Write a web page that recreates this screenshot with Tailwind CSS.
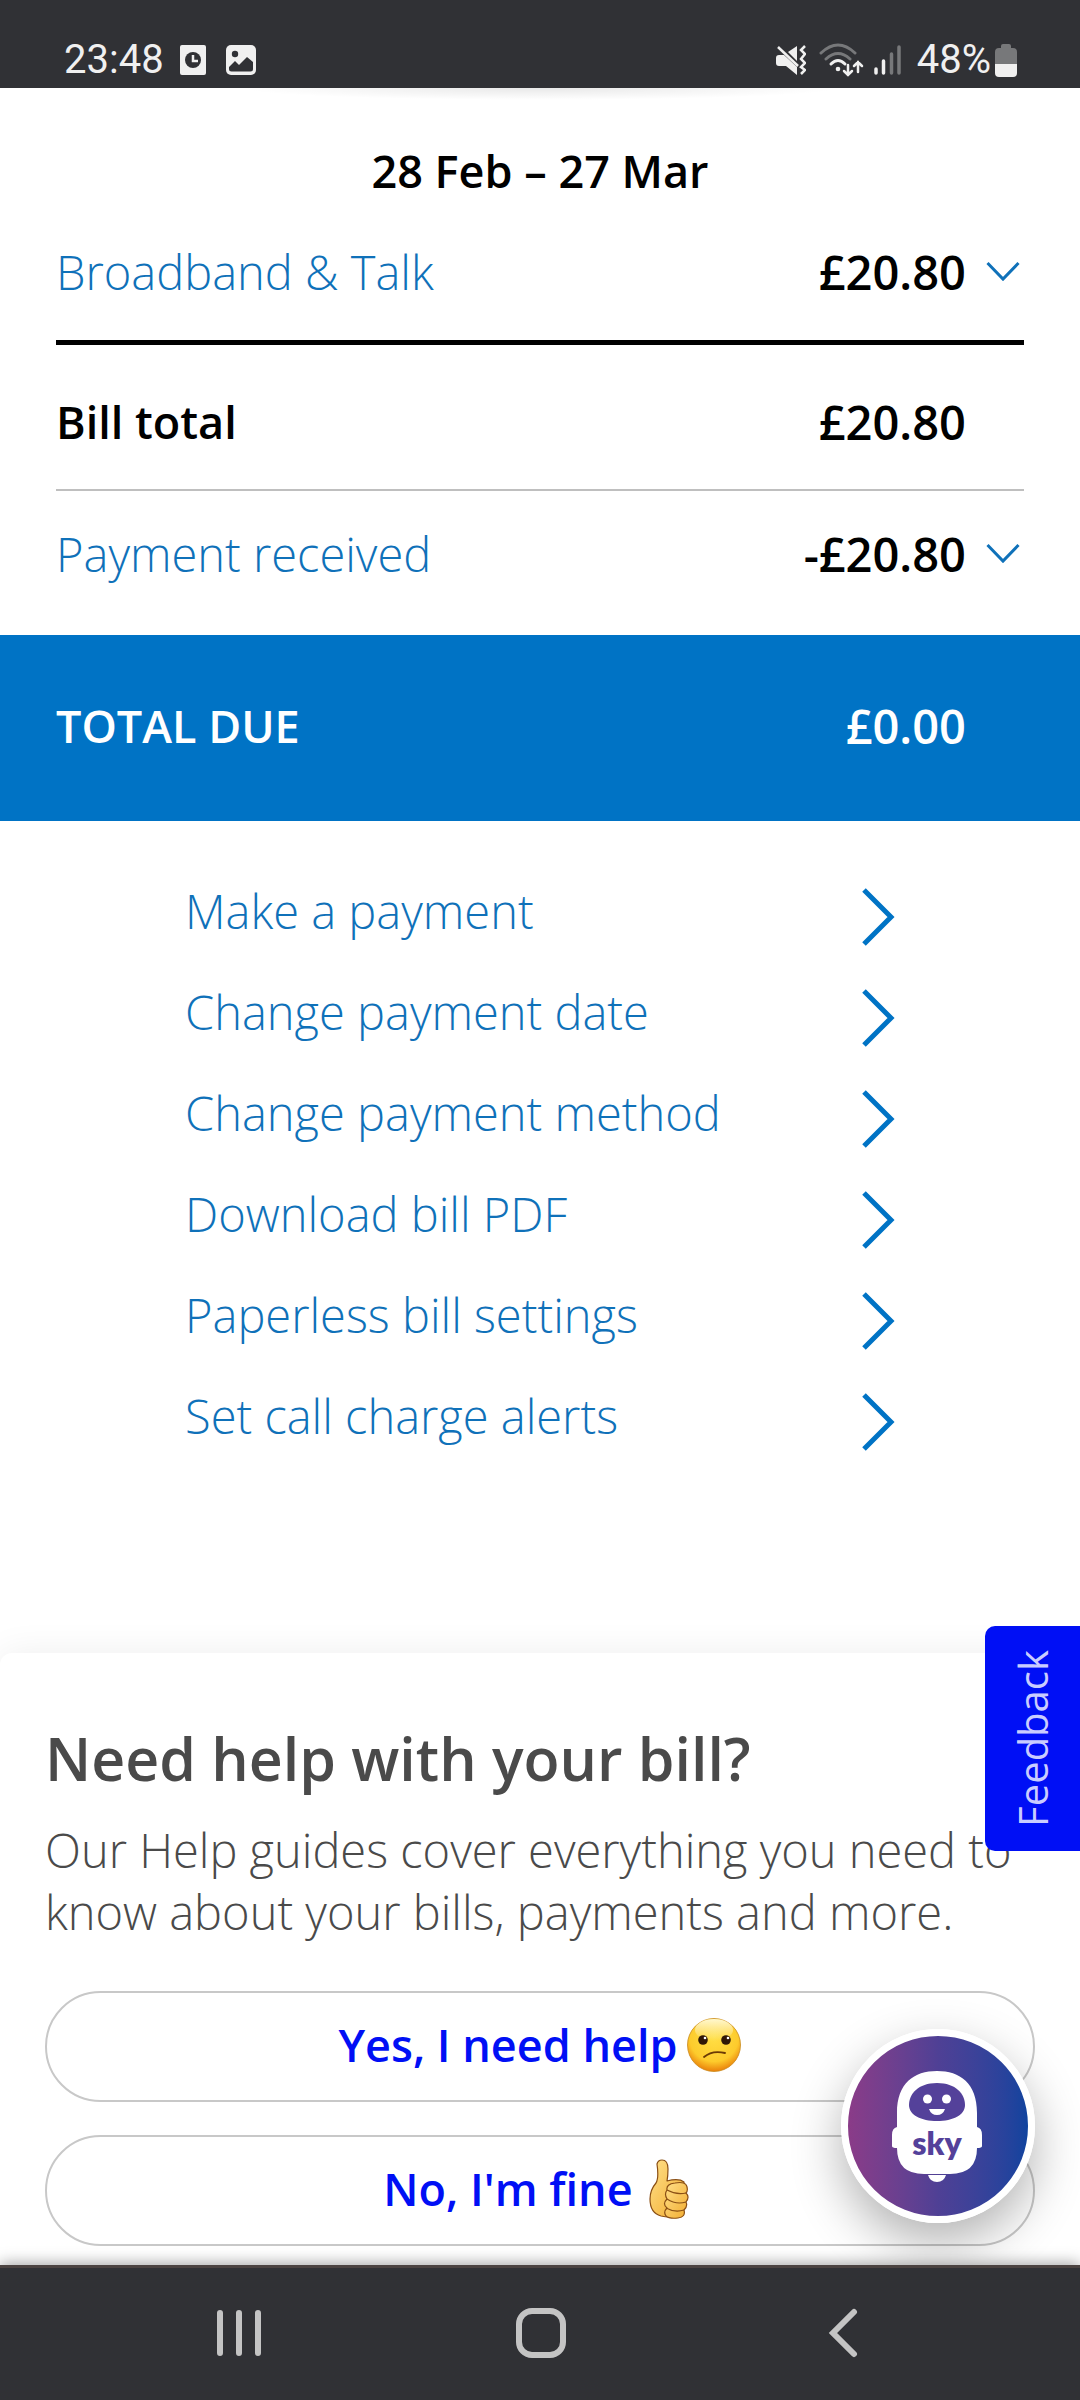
<!DOCTYPE html>
<html lang="en">
<head>
  <meta charset="UTF-8" />
  <meta name="viewport" content="width=device-width, initial-scale=1.0"/>
  <title>Your bill</title>
  <script src="https://cdn.jsdelivr.net/npm/@tailwindcss/browser@4"></script>
</head>
<body class="bg-white text-black font-['Open_Sans',sans-serif]">
  <div class="min-h-screen flex flex-col relative overflow-hidden">

    <!-- Status bar -->
    <header class="bg-[#303135] text-[#f0f0f0] h-[88px] pt-[34px] pl-16 pr-[63px] flex justify-between items-start font-[Roboto,sans-serif] text-[40px] leading-[52px]">
      <div class="flex items-center">
        <span>23:48</span>
        <svg class="ml-4 w-[26px] h-[30px]" viewBox="0 0 26 30" aria-hidden="true">
          <rect width="26" height="30" rx="2" fill="#f0f0f0"/>
          <circle cx="13" cy="15" r="8" fill="#303135"/>
          <path d="M13 10v6h5" fill="none" stroke="#f0f0f0" stroke-width="2.5"/>
        </svg>
        <svg class="ml-5 w-[30px] h-[30px]" viewBox="0 0 30 30" aria-hidden="true">
          <rect width="30" height="30" rx="5" fill="#f0f0f0"/>
          <circle cx="9" cy="9" r="3.2" fill="#303135"/>
          <path d="M3 22l6-6 4 4 8-8 6 5v7a2.5 2.5 0 0 1-2.5 2.5h-19A2.5 2.5 0 0 1 3 24z" fill="#303135"/>
        </svg>
      </div>
      <div class="flex items-center">
        <svg class="w-[30px] h-[32px]" viewBox="0 0 30 32" aria-hidden="true">
          <path d="M0 14q0-3 3-3h5L21 23v8L10 22H3q-3 0-3-3z" fill="#f0f0f0"/>
          <path d="M21 2v15l-9-9z" fill="#f0f0f0"/>
          <path d="M2 3l20 19" stroke="#f0f0f0" stroke-width="2.5"/>
          <path d="M29 2l-4 4 4 4-4 5 4 4-4 4 4 3-4 4" fill="none" stroke="#f0f0f0" stroke-width="2.5"/>
        </svg>
        <svg class="ml-[13px] w-[46px] h-[36px]" viewBox="0 0 46 36" fill="none" stroke-linecap="round" aria-hidden="true">
          <path d="M2 11Q19-5 36 11M7 17q12-11 24 0" stroke="#77787a" stroke-width="3"/>
          <path d="M12 22q7-7 14 0" stroke="#f0f0f0" stroke-width="3"/>
          <circle cx="19" cy="27" r="2.3" fill="#f0f0f0"/>
          <path d="M29 23v10m-4-4l4 4 4-4M39 30V20m-4 4l4-4 4 4" stroke="#f0f0f0" stroke-width="2.5"/>
        </svg>
        <svg class="ml-[9px] w-[27px] h-[30px]" viewBox="0 0 27 30" stroke-linecap="round" stroke-width="3.5" aria-hidden="true">
          <path d="M2 24v4M9.5 16v12" stroke="#f0f0f0"/>
          <path d="M17.5 9v19M25 2v26" stroke="#77787a"/>
        </svg>
        <span class="ml-4">48%</span>
        <svg class="ml-1 w-[22px] h-[33px]" viewBox="0 0 22 33" aria-hidden="true">
          <path d="M6 2q0-2 2-2h6q2 0 2 2v2h2q4 0 4 4v13H0V8q0-4 4-4h2z" fill="#77787a"/>
          <path d="M0 20h22v9q0 4-4 4H4q-4 0-4-4z" fill="#f0f0f0"/>
        </svg>
      </div>
    </header>

    <main class="flex-1 text-[47px] leading-[62px]">

      <!-- Bill summary -->
      <section class="pt-[52px] px-14 pb-[50px] bg-[radial-gradient(ellipse_300px_12px_at_50%_0,rgba(0,0,0,0.09),transparent)]">
        <h2 class="text-center font-semibold text-[45px]">28 Feb – 27 Mar</h2>

        <button class="w-full mt-[39px] pb-[37px] flex items-center border-b-5 border-black text-left">
          <span class="flex-1 font-light text-[#0f71b9]">Broadband &amp; Talk</span>
          <span class="font-semibold">£20.80</span>
          <svg class="ml-5 mr-1 w-[34px] h-[22px]" viewBox="0 0 34 22" fill="none" stroke="#0f71b9" stroke-width="3" aria-hidden="true">
            <path d="M1.5 2L17 18 32.5 2"/>
          </svg>
        </button>

        <div class="pt-[46px] pb-9 pr-[58px] flex justify-between border-b-2 border-[#bfbfbf] font-semibold">
          <span class="text-[45px]">Bill total</span>
          <span>£20.80</span>
        </div>

        <button class="w-full mt-8 flex items-center text-left">
          <span class="flex-1 font-light text-[#0f71b9]">Payment received</span>
          <span class="font-semibold">-£20.80</span>
          <svg class="ml-5 mr-1 w-[34px] h-[22px]" viewBox="0 0 34 22" fill="none" stroke="#0f71b9" stroke-width="3" aria-hidden="true">
            <path d="M1.5 2L17 18 32.5 2"/>
          </svg>
        </button>
      </section>

      <section class="bg-[#0073c5] text-white font-semibold pt-[60px] pb-16 pl-14 pr-[114px] flex justify-between">
        <span class="text-[45px]">TOTAL DUE</span>
        <span>£0.00</span>
      </section>

      <!-- Bill actions -->
      <nav class="pt-[59px] pb-[194px] px-[185px] flex flex-col gap-[27px] font-light text-[#0f71b9]">
        <a href="#" class="flex justify-between">Make a payment
          <svg class="w-[33px] h-[74px]" viewBox="0 0 33 74" fill="none" stroke="#0073c5" stroke-width="5" aria-hidden="true"><path d="M2 10l27 27L2 64"/></svg>
        </a>
        <a href="#" class="flex justify-between">Change payment date
          <svg class="w-[33px] h-[74px]" viewBox="0 0 33 74" fill="none" stroke="#0073c5" stroke-width="5" aria-hidden="true"><path d="M2 10l27 27L2 64"/></svg>
        </a>
        <a href="#" class="flex justify-between">Change payment method
          <svg class="w-[33px] h-[74px]" viewBox="0 0 33 74" fill="none" stroke="#0073c5" stroke-width="5" aria-hidden="true"><path d="M2 10l27 27L2 64"/></svg>
        </a>
        <a href="#" class="flex justify-between">Download bill PDF
          <svg class="w-[33px] h-[74px]" viewBox="0 0 33 74" fill="none" stroke="#0073c5" stroke-width="5" aria-hidden="true"><path d="M2 10l27 27L2 64"/></svg>
        </a>
        <a href="#" class="flex justify-between">Paperless bill settings
          <svg class="w-[33px] h-[74px]" viewBox="0 0 33 74" fill="none" stroke="#0073c5" stroke-width="5" aria-hidden="true"><path d="M2 10l27 27L2 64"/></svg>
        </a>
        <a href="#" class="flex justify-between">Set call charge alerts
          <svg class="w-[33px] h-[74px]" viewBox="0 0 33 74" fill="none" stroke="#0073c5" stroke-width="5" aria-hidden="true"><path d="M2 10l27 27L2 64"/></svg>
        </a>
      </nav>

      <!-- Help card -->
      <section class="rounded-t-xl shadow-[0_0_36px_rgba(0,0,0,0.07)] pt-[65px] px-[45px] pb-[19px] text-[#4a4a4a]">
        <h2 class="text-[59px] leading-[80px] font-semibold">Need help with your bill?</h2>
        <p class="mt-[21px] font-light">Our Help guides cover everything you need to know about your bills, payments and more.</p>
        <div class="mt-12 flex flex-col gap-[33px] text-[#000ff5] text-[45px] font-semibold">
          <button class="h-[111px] pb-1 border-2 border-[#c8c8c8] rounded-full flex items-center justify-center gap-2">
            Yes, I need help
            <svg class="w-[56px] h-[56px]" viewBox="0 0 56 56" role="img" aria-label="confused face">
              <defs>
                <radialGradient id="face" cx="50%" cy="35%" r="66%">
                  <stop offset="0" stop-color="#ffdf45"/>
                  <stop offset="0.7" stop-color="#fdcb2c"/>
                  <stop offset="1" stop-color="#e97c08"/>
                </radialGradient>
                <linearGradient id="shine" x1="0" y1="0" x2="0" y2="1">
                  <stop offset="0" stop-color="#fff8cf"/>
                  <stop offset="1" stop-color="#fff8cf" stop-opacity="0"/>
                </linearGradient>
              </defs>
              <circle cx="28" cy="28" r="26.5" fill="url(#face)" stroke="#c98a1c" stroke-width="0.8"/>
              <ellipse cx="28" cy="13" rx="19" ry="11" fill="url(#shine)"/>
              <circle cx="17" cy="23" r="4.8" fill="#2f1706"/>
              <circle cx="40" cy="23" r="4.8" fill="#2f1706"/>
              <circle cx="19" cy="21" r="1.3" fill="#fff"/>
              <circle cx="42" cy="21" r="1.3" fill="#fff"/>
              <path d="M18 40q8-7 21-4" fill="none" stroke="#6b3a05" stroke-width="1.8" stroke-linecap="round"/>
            </svg>
          </button>
          <button class="h-[111px] pb-1 border-2 border-[#c8c8c8] rounded-full flex items-center justify-center gap-2">
            No, I'm fine
            <svg class="w-[56px] h-[60px]" viewBox="0 0 56 60" role="img" aria-label="thumbs up">
              <defs>
                <linearGradient id="thumb" x1="0" y1="0" x2="1" y2="1">
                  <stop offset="0" stop-color="#ffe08a"/>
                  <stop offset="1" stop-color="#f2ac2e"/>
                </linearGradient>
              </defs>
              <g fill="url(#thumb)" stroke="#8a4f14" stroke-width="1.2" stroke-linejoin="round">
                <path d="M16 5q1-4 5-4 6 0 6 9 0 7-1 12 12-3 17 1l-2 31q-8 6-21 3Q9 54 9 40q0-9 6-16 3-5 1-19z"/>
                <path d="M26 31q-1-6 8-7 11-2 12 4 1 4-1 6 4 4 0 9 2 4-2 8 2 7-6 8-9 1-12-2-3-4 1-8-5-4 0-9-3-5 0-9z"/>
                <path d="M26 31q9 5 19 3M26 40q9 6 19 3M25 49q9 5 18 2" fill="none"/>
              </g>
            </svg>
          </button>
        </div>
      </section>
    </main>

    <!-- Floating controls -->
    <button class="absolute right-0 top-[1626px] w-[95px] h-[225px] rounded-l-[10px] bg-[#000ff5] text-[#c9ccff] text-[40px] leading-[48px] flex items-center justify-center">
      <span class="[writing-mode:vertical-rl] rotate-180">Feedback</span>
    </button>

    <button class="absolute right-[45px] bottom-[177px] w-[194px] h-[194px] rounded-full border-7 border-white shadow-[0_20px_50px_rgba(0,0,0,0.3)] bg-linear-to-r from-[#8f3a87] via-[#4f4095] to-[#00439f] bg-origin-border" aria-label="Sky chat assistant">
      <svg class="w-full h-full" viewBox="0 0 180 180" aria-hidden="true">
        <path d="M49 77C49 47 66 35 89 35s40 12 40 42v14q5 1 5 8v11q0 2-5 2 0 26-27 26H76q-27 0-27-26-5 0-5-2V99q0-7 5-8z" fill="#fff"/>
        <path d="M89 47c19 0 28 11 28 22 0 10-12 16-28 16s-28-6-28-16c0-11 9-22 28-22z" fill="#54419a"/>
        <circle cx="79.5" cy="63" r="4.5" fill="#fff"/>
        <circle cx="98.5" cy="63" r="4.5" fill="#fff"/>
        <path d="M81 73h16q-2 6-8 6t-8-6z" fill="#fff"/>
        <path d="M80 139h18q-2 7-9 7t-9-7z" fill="#fff"/>
        <text x="89" y="119" text-anchor="middle" font-family="Lato, sans-serif" font-weight="800" font-size="32" fill="#54419a">sky</text>
      </svg>
    </button>

    <!-- Navigation bar -->
    <footer class="relative bg-[#303135] border-t-3 border-[#4b4341] h-[135px] pl-[194px] pr-[192px] pb-[2px] flex items-center justify-between shadow-[0_-2px_14px_rgba(0,0,0,0.35)]">
      <button class="w-[90px] flex justify-center" aria-label="Recent apps">
        <svg class="w-[46px] h-[50px]" viewBox="0 0 46 50" stroke="#c4c4c4" stroke-width="6" stroke-linecap="round"><path d="M4 5v40M23 5v40M42 5v40"/></svg>
      </button>
      <button class="w-[90px] flex justify-center" aria-label="Home">
        <svg class="w-[50px] h-[50px]" viewBox="0 0 50 50"><rect x="3" y="3" width="44" height="44" rx="13" fill="none" stroke="#c4c4c4" stroke-width="6"/></svg>
      </button>
      <button class="w-[90px] flex justify-center" aria-label="Back">
        <svg class="w-[30px] h-[50px]" viewBox="0 0 30 50" fill="none" stroke="#c4c4c4" stroke-width="6" stroke-linecap="round"><path d="M26 4L5 25l21 21"/></svg>
      </button>
    </footer>
  </div>
</body>
</html>
